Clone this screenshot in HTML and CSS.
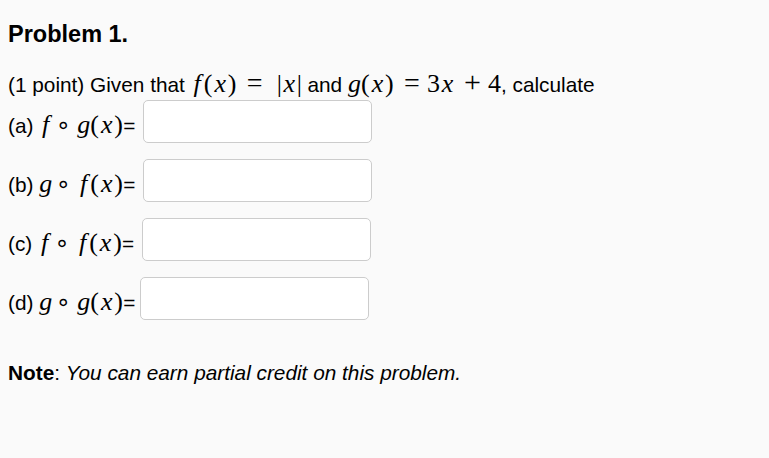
FILE: index.html
```html
<!DOCTYPE html>
<html>
<head>
<meta charset="utf-8">
<link rel="stylesheet" href="styles.css">
</head>
<body>
<div class="problem">
  <h1 class="title">Problem 1.</h1>
  <p class="intro">(1 point) Given that <span class="math"><i class="mi f">f</i><span class="p">(</span><i class="mi x">x</i><span class="p">)</span><span class="rel">=</span><span class="bar">|</span><i class="mi x">x</i><span class="bar">|</span></span> and <span class="math"><i class="mi g">g</i><span class="p">(</span><i class="mi x">x</i><span class="p">)</span><span class="rel rel2">=</span><span class="num">3</span><i class="mi x">x</i><span class="bin">+</span><span class="num">4</span></span>, calculate</p>
  <div class="answers">
    <div class="row">
      <span class="label">(a) <span class="math"><i class="mi f">f</i><span class="circ">∘</span><i class="mi g">g</i><span class="p">(</span><i class="mi x">x</i><span class="p">)</span></span>=</span>
      <input class="ans" type="text">
    </div>
    <div class="row">
      <span class="label">(b) <span class="math"><i class="mi g">g</i><span class="circ">∘</span><i class="mi f">f</i><span class="p">(</span><i class="mi x">x</i><span class="p">)</span></span>=</span>
      <input class="ans" type="text">
    </div>
    <div class="row">
      <span class="label">(c) <span class="math"><i class="mi f">f</i><span class="circ">∘</span><i class="mi f">f</i><span class="p">(</span><i class="mi x">x</i><span class="p">)</span></span>=</span>
      <input class="ans" type="text">
    </div>
    <div class="row">
      <span class="label">(d) <span class="math"><i class="mi g">g</i><span class="circ">∘</span><i class="mi g">g</i><span class="p">(</span><i class="mi x">x</i><span class="p">)</span></span>=</span>
      <input class="ans ans-d" type="text">
    </div>
  </div>
  <p class="note"><b>Note</b>: <i>You can earn partial credit on this problem.</i></p>
</div>
</body>
</html>
```

FILE: styles.css
```css
html, body {
  margin: 0;
  background: #fafafa;
}
body {
  font-family: "Liberation Sans", Arial, sans-serif;
  font-size: 20.8px;
  color: #000;
}
.problem {
  padding: 20px 8px 0;
}
.title {
  margin: 0;
  font-size: 23.5px;
  line-height: 28px;
  font-weight: bold;
}
.intro {
  margin: 22px 0 0;
  line-height: 30px;
  white-space: nowrap;
}
.answers {
  display: flex;
  flex-direction: column;
  gap: 16px;
}
.row {
  display: flex;
  align-items: flex-start;
  height: 43px;
}
.label {
  padding-top: 11px;
  line-height: 30px;
  white-space: nowrap;
}
.ans {
  margin: 0 0 0 8px;
  width: 229px;
  height: 43px;
  box-sizing: border-box;
  border: 1px solid #cccccc;
  border-radius: 5px;
  background: #fff;
  padding: 0;
}
.ans-d {
  margin-left: 5px;
}
.note {
  margin: 38px 0 0;
  line-height: 30px;
}
.math {
  font-family: "Liberation Serif", "Times New Roman", serif;
  font-size: 26px;
  line-height: 20px;
  font-style: normal;
}
.math > * {
  display: inline-block;
  text-align: center;
}
.mi {
  font-style: italic;
}
.mi.f {
  width: 13px;
}
.mi.g {
  width: 13px;
}
.mi.x {
  width: 15px;
}
.p {
  width: 9px;
}
.bar {
  width: 5px;
}
.num {
  width: 13px;
}
.rel {
  font-size: 28px;
  width: 18px;
  margin: 0 13px 0 9px;
}
.rel2 {
  margin-right: 6px;
}
.bin {
  font-size: 30px;
  width: 19px;
  margin: 0 6px 0 8px;
}
.circ {
  font-family: "DejaVu Sans", sans-serif;
  font-size: 24px;
  width: 18px;
  margin: 0 5px 0 2px;
}
```
